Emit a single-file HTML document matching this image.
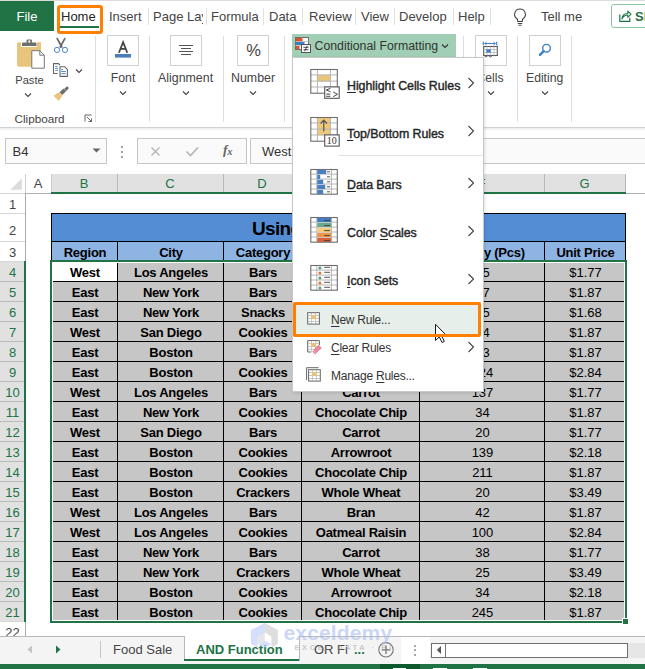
<!DOCTYPE html>
<html><head><meta charset="utf-8"><style>
html,body{margin:0;padding:0;}
body{width:645px;height:669px;position:relative;overflow:hidden;background:#fff;font-family:"Liberation Sans",sans-serif;}
body>div,body>svg,div>div{position:absolute;}
u{text-decoration:underline;text-underline-offset:2px;text-decoration-thickness:1px;}
</style></head><body>
<div style="left:0px;top:0px;width:645px;height:1px;background:#dcdcdc"></div>
<div style="left:0px;top:1px;width:54px;height:30px;background:#217346"></div>
<div style="left:0px;top:10.00px;width:54px;font-size:13px;line-height:13px;font-weight:400;color:#fff;text-align:center;white-space:nowrap;">File</div>
<div style="left:61px;top:10.00px;font-size:13px;line-height:13px;font-weight:400;color:#262626;text-align:left;white-space:nowrap;">Home</div>
<div style="left:60px;top:26px;width:39px;height:2px;background:#217346"></div>
<div style="left:57px;top:5px;width:40px;height:23px;border:3px solid #ff8000;border-radius:3px"></div>
<div style="left:109px;top:10.00px;font-size:13px;line-height:13px;font-weight:400;color:#444;text-align:left;white-space:nowrap;">Insert</div>
<div style="left:153px;top:0;width:50px;height:33px;overflow:hidden">
<div style="left:0;top:10.00px;font-size:13px;line-height:13px;color:#444;white-space:nowrap">Page Layout</div></div>
<div style="left:211px;top:0;width:48px;height:33px;overflow:hidden">
<div style="left:0;top:10.00px;font-size:13px;line-height:13px;color:#444;white-space:nowrap">Formula</div></div>
<div style="left:269px;top:10.00px;font-size:13px;line-height:13px;font-weight:400;color:#444;text-align:left;white-space:nowrap;">Data</div>
<div style="left:309px;top:10.00px;font-size:13px;line-height:13px;font-weight:400;color:#444;text-align:left;white-space:nowrap;">Review</div>
<div style="left:361px;top:10.00px;font-size:13px;line-height:13px;font-weight:400;color:#444;text-align:left;white-space:nowrap;">View</div>
<div style="left:399px;top:0;width:49px;height:33px;overflow:hidden">
<div style="left:0;top:10.00px;font-size:13px;line-height:13px;color:#444;white-space:nowrap">Develop</div></div>
<div style="left:458px;top:10.00px;font-size:13px;line-height:13px;font-weight:400;color:#444;text-align:left;white-space:nowrap;">Help</div>
<div style="left:541px;top:10.00px;font-size:13px;line-height:13px;font-weight:400;color:#444;text-align:left;white-space:nowrap;">Tell me</div>
<div style="left:148px;top:8px;width:1px;height:17px;background:#e1e1e1"></div>
<div style="left:206px;top:8px;width:1px;height:17px;background:#e1e1e1"></div>
<div style="left:263px;top:8px;width:1px;height:17px;background:#e1e1e1"></div>
<div style="left:302px;top:8px;width:1px;height:17px;background:#e1e1e1"></div>
<div style="left:355px;top:8px;width:1px;height:17px;background:#e1e1e1"></div>
<div style="left:394px;top:8px;width:1px;height:17px;background:#e1e1e1"></div>
<div style="left:453px;top:8px;width:1px;height:17px;background:#e1e1e1"></div>
<div style="left:490px;top:8px;width:1px;height:17px;background:#e1e1e1"></div>
<svg style="left:510px;top:6px" width="20" height="22" viewBox="510 6 20 22"><path d="M520 9a5.3 5.3 0 0 0-3.3 9.5c.7.6 1 1.2 1 2v1h4.6v-1c0-.8.3-1.4 1-2A5.3 5.3 0 0 0 520 9z" fill="none" stroke="#444" stroke-width="1.1"/><path d="M517.8 23.5h4.4M518.5 25.3h3" stroke="#444" stroke-width="1.1"/></svg>
<div style="left:611px;top:4px;width:40px;height:24px;border:1px solid #8cc3a2;border-radius:3px;background:#fff;box-sizing:border-box"></div>
<svg style="left:617px;top:8px" width="16" height="16" viewBox="617 8 16 16"><path d="M619.8 14.5v6.8h10v-3.5" fill="none" stroke="#217346" stroke-width="1.2"/><path d="M622 19c0-3.3 2.2-5.5 5.8-5.5V11l3.2 3.2-3.2 3.2v-2.3c-2.8 0-4.6 1.3-5.8 3.9z" fill="none" stroke="#217346" stroke-width="1.05" stroke-linejoin="round"/></svg>
<div style="left:635px;top:10.00px;font-size:13px;line-height:13px;font-weight:700;color:#217346;text-align:left;white-space:nowrap;">Share</div>
<div style="left:95px;top:36px;width:1px;height:86px;background:#dedede"></div>
<div style="left:149px;top:36px;width:1px;height:86px;background:#dedede"></div>
<div style="left:223px;top:36px;width:1px;height:86px;background:#dedede"></div>
<div style="left:284px;top:36px;width:1px;height:86px;background:#dedede"></div>
<div style="left:463px;top:36px;width:1px;height:86px;background:#dedede"></div>
<div style="left:517px;top:36px;width:1px;height:86px;background:#dedede"></div>
<div style="left:571px;top:36px;width:1px;height:86px;background:#dedede"></div>
<div style="left:0px;top:127px;width:645px;height:1px;background:#d2d2d2"></div>
<div style="left:0px;top:128px;width:645px;height:3px;background:linear-gradient(#ebebeb,#fff)"></div>
<svg style="left:14px;top:36px" width="34" height="36" viewBox="14 36 34 36"><path d="M19 42.2h22a0 0 0 0 1 0 0v24.5H19a2 2 0 0 1-2-2V44.2a2 2 0 0 1 2-2z" fill="#e8c47c"/>
<rect x="21" y="42" width="16" height="5" fill="#fff"/>
<path d="M22 46v-2.5a1 1 0 0 1 1-1h3.5v-2a1 1 0 0 1 1-1h3.5a1 1 0 0 1 1 1v2h3.5a1 1 0 0 1 1 1V46z" fill="#6e6e6e"/>
<rect x="28.3" y="40.5" width="2" height="2" fill="#fff"/>
<path d="M31.8 50.7h8l4.5 4.5v13h-12.5z" fill="#fff" stroke="#777" stroke-width="1"/>
<path d="M39.8 50.7v4.5h4.5" fill="none" stroke="#777" stroke-width="1"/></svg>
<div style="left:15.3px;top:74.60px;font-size:11.1px;line-height:11.1px;font-weight:400;color:#444;text-align:left;white-space:nowrap;">Paste</div>
<svg style="left:23px;top:91px" width="10" height="8" viewBox="23 91 10 8"><path d="M25 93.5l3 3 3-3" fill="none" stroke="#444" stroke-width="1.1"/></svg>
<svg style="left:52px;top:36px" width="18" height="18" viewBox="52 36 18 18"><path d="M57.2 38.6l4.6 8.4M64.8 38.6l-4.6 8.4" stroke="#666" stroke-width="1.7" stroke-linecap="round"/>
<circle cx="57" cy="49.9" r="2.6" fill="none" stroke="#3d7fc6" stroke-width="0.95"/>
<circle cx="65" cy="49.9" r="2.6" fill="none" stroke="#3d7fc6" stroke-width="0.95"/></svg>
<svg style="left:52px;top:62px" width="18" height="17" viewBox="52 62 18 17"><path d="M57.6 73.5h-4.1V63.6h5l1.6 1.6" fill="none" stroke="#666" stroke-width="1.1"/>
<path d="M60 66.8h4.8l2.6 2.6v7H60z" fill="#fff" stroke="#666" stroke-width="1.1"/>
<path d="M55.2 66.4h2.3M55.2 68.4h2.8M55.2 70.4h2.8M61.2 69.4h1.7M61.2 71.5h4.6M61.2 73.6h4.6" stroke="#3d7fc6" stroke-width="0.9"/></svg>
<svg style="left:73.5px;top:66.5px" width="10" height="8" viewBox="73.5 66.5 10 8"><path d="M75.5 69.0l3 3 3-3" fill="none" stroke="#444" stroke-width="1.1"/></svg>
<svg style="left:52px;top:85px" width="18" height="17" viewBox="52 85 18 17"><path d="M64.3 88.8l2.8-2.6 1.9 1.9-2.6 2.8z" fill="#6e6e6e"/><path d="M59.5 92.2l4.2-3.8 2.5 2.5-3.8 4.2z" fill="#6e6e6e"/>
<path d="M53.5 95.8l5.6-3.6 3.3 3.3-3.6 5.6z" fill="#e8c47c"/></svg>
<div style="left:14.5px;top:112.60px;font-size:11.7px;line-height:11.7px;font-weight:400;color:#444;text-align:left;white-space:nowrap;">Clipboard</div>
<svg style="left:84px;top:114px" width="9" height="9" viewBox="84 114 9 9"><path d="M85 121.5v-6.5h6.5" fill="none" stroke="#666" stroke-width="1"/><path d="M87 117l4.5 4.5M91.5 118.5v3h-3" fill="none" stroke="#666" stroke-width="1"/></svg>
<div style="left:107px;top:35px;width:32px;height:31px;border:1px solid #d0d0d0;background:#fff;box-sizing:border-box"></div>
<svg style="left:107px;top:35px" width="32" height="31" viewBox="107 35 32 31"><path d="M118.9 52.8l4.2-10.6 4.2 10.6M120.4 48.8h5.4" fill="none" stroke="#444" stroke-width="1.75"/><rect x="115" y="54" width="16" height="3.6" fill="#4a7ebb"/></svg>
<div style="left:107px;top:71.59px;width:32px;font-size:12.3px;line-height:12.3px;font-weight:400;color:#444;text-align:center;white-space:nowrap;">Font</div>
<svg style="left:118px;top:89px" width="10" height="8" viewBox="118 89 10 8"><path d="M120 91.5l3 3 3-3" fill="none" stroke="#444" stroke-width="1.1"/></svg>
<div style="left:170px;top:35px;width:32px;height:31px;border:1px solid #d0d0d0;background:#fff;box-sizing:border-box"></div>
<svg style="left:170px;top:35px" width="32" height="31" viewBox="170 35 32 31"><path d="M179 45.5h14M181 48.5h10M179 51.5h14M181 54.5h10" stroke="#555" stroke-width="1.1"/></svg>
<div style="left:158px;top:71.50px;font-size:12.4px;line-height:12.4px;font-weight:400;color:#444;text-align:left;white-space:nowrap;">Alignment</div>
<svg style="left:181px;top:89px" width="10" height="8" viewBox="181 89 10 8"><path d="M183 91.5l3 3 3-3" fill="none" stroke="#444" stroke-width="1.1"/></svg>
<div style="left:237px;top:35px;width:32px;height:31px;border:1px solid #d0d0d0;background:#fff;box-sizing:border-box"></div>
<div style="left:237.5px;top:42.03px;width:32px;font-size:16.5px;line-height:16.5px;font-weight:400;color:#444;text-align:center;white-space:nowrap;">%</div>
<div style="left:231px;top:71.50px;font-size:12.4px;line-height:12.4px;font-weight:400;color:#444;text-align:left;white-space:nowrap;">Number</div>
<svg style="left:248px;top:89px" width="10" height="8" viewBox="248 89 10 8"><path d="M250 91.5l3 3 3-3" fill="none" stroke="#444" stroke-width="1.1"/></svg>
<div style="left:475px;top:35px;width:32px;height:31px;border:1px solid #d0d0d0;background:#fff;box-sizing:border-box"></div>
<svg style="left:475px;top:35px" width="32" height="31" viewBox="475 35 32 31"><path d="M484.5 43.5h11" stroke="#3d7fc6" stroke-width="1"/><path d="M483.3 41.8v3.4M496.7 41.8v3.4" stroke="#3d7fc6" stroke-width="1.2"/>
<path d="M486.5 42l-1.8 1.5 1.8 1.5M493.5 42l1.8 1.5-1.8 1.5" fill="none" stroke="#3d7fc6" stroke-width="0.9"/>
<rect x="483.7" y="46.5" width="13.6" height="9" fill="#fff" stroke="#555" stroke-width="1.1"/>
<path d="M483.7 49.5h13.6M483.7 52.5h13.6M487 46.5v9M490.5 46.5v9M494 46.5v9" stroke="#b8b8b8" stroke-width="0.8"/>
<rect x="486.3" y="49.3" width="4.4" height="3.3" fill="#3d7fc6"/>
<path d="M484.5 56.3q1.5 1.3 3 0M488.8 56.3q1.5 1.3 3 0" fill="none" stroke="#555" stroke-width="0.9"/></svg>
<div style="left:474px;top:71.76px;width:32px;font-size:12.1px;line-height:12.1px;font-weight:400;color:#444;text-align:center;white-space:nowrap;">Cells</div>
<svg style="left:486px;top:89px" width="10" height="8" viewBox="486 89 10 8"><path d="M488 91.5l3 3 3-3" fill="none" stroke="#444" stroke-width="1.1"/></svg>
<div style="left:529px;top:35px;width:32px;height:31px;border:1px solid #d0d0d0;background:#fff;box-sizing:border-box"></div>
<svg style="left:529px;top:35px" width="32" height="31" viewBox="529 35 32 31"><circle cx="546.5" cy="48.2" r="3.8" fill="none" stroke="#3d7fc6" stroke-width="1.4"/><path d="M543.6 51.2l-3.6 3.6" stroke="#3d7fc6" stroke-width="2.4" stroke-linecap="round"/></svg>
<div style="left:526px;top:71.67px;font-size:12.2px;line-height:12.2px;font-weight:400;color:#444;text-align:left;white-space:nowrap;">Editing</div>
<svg style="left:540px;top:89px" width="10" height="8" viewBox="540 89 10 8"><path d="M542 91.5l3 3 3-3" fill="none" stroke="#444" stroke-width="1.1"/></svg>
<div style="left:292px;top:34px;width:164px;height:23px;background:#a0cfb5"></div>
<svg style="left:292px;top:34px" width="22" height="22" viewBox="292 34 22 22"><rect x="295.5" y="37.5" width="13" height="12" fill="#fff" stroke="#6e6e6e" stroke-width="1"/>
<path d="M301.5 37.5v12M295.5 41.5h13M295.5 45.5h13" stroke="#bbb" stroke-width="0.8"/>
<rect x="296" y="38" width="6.5" height="3.2" fill="#d9532c"/><rect x="296" y="42" width="8.5" height="3" fill="#3d7fc6"/><rect x="296" y="46" width="3.5" height="3.2" fill="#d9532c"/>
<rect x="301.5" y="44.5" width="9" height="8" fill="#fff" stroke="#555" stroke-width="1"/>
<path d="M303.5 47.3h5M303.5 49.7h5M307.3 45.7l-2.6 5.6" stroke="#333" stroke-width="0.9"/></svg>
<div style="left:314.5px;top:39.59px;font-size:12.3px;line-height:12.3px;font-weight:400;color:#333;text-align:left;white-space:nowrap;">Conditional Formatting</div>
<svg style="left:439.5px;top:41.5px" width="10" height="8" viewBox="439.5 41.5 10 8"><path d="M441.5 44.0l3 3 3-3" fill="none" stroke="#333" stroke-width="1.1"/></svg>
<div style="left:5px;top:138px;width:102px;height:26px;border:1px solid #c6c6c6;background:#fafafa;box-sizing:border-box"></div>
<div style="left:12.5px;top:145.00px;font-size:13px;line-height:13px;font-weight:400;color:#333;text-align:left;white-space:nowrap;">B4</div>
<svg style="left:90px;top:146px" width="12" height="8" viewBox="90 146 12 8"><path d="M92.5 148.5h8l-4 4z" fill="#666"/></svg>
<div style="left:121px;top:145.5px;width:2px;height:2px;background:#a0a0a0"></div>
<div style="left:121px;top:150.5px;width:2px;height:2px;background:#a0a0a0"></div>
<div style="left:121px;top:155.5px;width:2px;height:2px;background:#a0a0a0"></div>
<div style="left:137px;top:138px;width:110px;height:26px;border:1px solid #c6c6c6;background:#fafafa;box-sizing:border-box"></div>
<svg style="left:148px;top:144px" width="16" height="16" viewBox="148 144 16 16"><path d="M151.5 147.5l8 8M159.5 147.5l-8 8" stroke="#b4b4b4" stroke-width="1.3"/></svg>
<svg style="left:184px;top:144px" width="18" height="16" viewBox="184 144 18 16"><path d="M186.5 151.5l4 4 7.5-8" fill="none" stroke="#b4b4b4" stroke-width="1.6"/></svg>
<svg style="left:220px;top:142px" width="18" height="18" viewBox="220 142 18 18"><text x="223" y="154.3" font-family="Liberation Serif" font-style="italic" font-weight="700" font-size="13.5" fill="#666">f</text><text x="227.3" y="154.8" font-family="Liberation Serif" font-style="italic" font-weight="700" font-size="10.5" fill="#666">x</text></svg>
<div style="left:250px;top:138px;width:400px;height:26px;border:1px solid #c6c6c6;background:#fafafa;box-sizing:border-box"></div>
<div style="left:262px;top:145.00px;font-size:13px;line-height:13px;font-weight:400;color:#333;text-align:left;white-space:nowrap;">West</div>
<div style="left:51px;top:174px;width:574px;height:18px;background:#e1e1e1"></div>
<div style="left:51px;top:192px;width:575px;height:2px;background:#217346"></div>
<div style="left:0px;top:193px;width:25px;height:1px;background:#d4d4d4"></div>
<div style="left:25px;top:193px;width:26px;height:1px;background:#b0b0b0"></div>
<div style="left:626px;top:193px;width:19px;height:1px;background:#b0b0b0"></div>
<div style="left:25px;top:174px;width:1px;height:19px;background:#cdcdcd"></div>
<div style="left:51px;top:174px;width:1px;height:18px;background:#cdcdcd"></div>
<div style="left:117px;top:174px;width:1px;height:18px;background:#b8b8b8"></div>
<div style="left:223px;top:174px;width:1px;height:18px;background:#b8b8b8"></div>
<div style="left:301px;top:174px;width:1px;height:18px;background:#b8b8b8"></div>
<div style="left:419px;top:174px;width:1px;height:18px;background:#b8b8b8"></div>
<div style="left:544px;top:174px;width:1px;height:18px;background:#b8b8b8"></div>
<div style="left:625px;top:174px;width:1px;height:18px;background:#b8b8b8"></div>
<svg style="left:8px;top:176px" width="16" height="16" viewBox="8 176 16 16"><path d="M21.8 178.5V189.8H10.3z" fill="#dcdcdc"/></svg>
<div style="left:25px;top:177.00px;width:26px;font-size:13px;line-height:13px;font-weight:400;color:#444;text-align:center;white-space:nowrap;">A</div>
<div style="left:51px;top:177.00px;width:66px;font-size:13px;line-height:13px;font-weight:400;color:#217346;text-align:center;white-space:nowrap;">B</div>
<div style="left:117px;top:177.00px;width:106px;font-size:13px;line-height:13px;font-weight:400;color:#217346;text-align:center;white-space:nowrap;">C</div>
<div style="left:223px;top:177.00px;width:78px;font-size:13px;line-height:13px;font-weight:400;color:#217346;text-align:center;white-space:nowrap;">D</div>
<div style="left:301px;top:177.00px;width:118px;font-size:13px;line-height:13px;font-weight:400;color:#217346;text-align:center;white-space:nowrap;">E</div>
<div style="left:419px;top:177.00px;width:125px;font-size:13px;line-height:13px;font-weight:400;color:#217346;text-align:center;white-space:nowrap;">F</div>
<div style="left:544px;top:177.00px;width:81px;font-size:13px;line-height:13px;font-weight:400;color:#217346;text-align:center;white-space:nowrap;">G</div>
<div style="left:0px;top:213px;width:25px;height:1px;background:#d6d6d6"></div>
<div style="left:0px;top:198.00px;width:25px;font-size:13px;line-height:13px;font-weight:400;color:#444;text-align:center;white-space:nowrap;">1</div>
<div style="left:0px;top:241px;width:25px;height:1px;background:#d6d6d6"></div>
<div style="left:0px;top:224.00px;width:25px;font-size:13px;line-height:13px;font-weight:400;color:#444;text-align:center;white-space:nowrap;">2</div>
<div style="left:0px;top:261px;width:25px;height:1px;background:#d6d6d6"></div>
<div style="left:0px;top:246.00px;width:25px;font-size:13px;line-height:13px;font-weight:400;color:#444;text-align:center;white-space:nowrap;">3</div>
<div style="left:0px;top:262px;width:24px;height:19px;background:#e1e1e1"></div>
<div style="left:0px;top:281px;width:24px;height:1px;background:#bababa"></div>
<div style="left:0px;top:266.00px;width:25px;font-size:13px;line-height:13px;font-weight:400;color:#217346;text-align:center;white-space:nowrap;">4</div>
<div style="left:0px;top:282px;width:24px;height:19px;background:#e1e1e1"></div>
<div style="left:0px;top:301px;width:24px;height:1px;background:#bababa"></div>
<div style="left:0px;top:286.00px;width:25px;font-size:13px;line-height:13px;font-weight:400;color:#217346;text-align:center;white-space:nowrap;">5</div>
<div style="left:0px;top:302px;width:24px;height:19px;background:#e1e1e1"></div>
<div style="left:0px;top:321px;width:24px;height:1px;background:#bababa"></div>
<div style="left:0px;top:306.00px;width:25px;font-size:13px;line-height:13px;font-weight:400;color:#217346;text-align:center;white-space:nowrap;">6</div>
<div style="left:0px;top:322px;width:24px;height:19px;background:#e1e1e1"></div>
<div style="left:0px;top:341px;width:24px;height:1px;background:#bababa"></div>
<div style="left:0px;top:326.00px;width:25px;font-size:13px;line-height:13px;font-weight:400;color:#217346;text-align:center;white-space:nowrap;">7</div>
<div style="left:0px;top:342px;width:24px;height:19px;background:#e1e1e1"></div>
<div style="left:0px;top:361px;width:24px;height:1px;background:#bababa"></div>
<div style="left:0px;top:346.00px;width:25px;font-size:13px;line-height:13px;font-weight:400;color:#217346;text-align:center;white-space:nowrap;">8</div>
<div style="left:0px;top:362px;width:24px;height:19px;background:#e1e1e1"></div>
<div style="left:0px;top:381px;width:24px;height:1px;background:#bababa"></div>
<div style="left:0px;top:366.00px;width:25px;font-size:13px;line-height:13px;font-weight:400;color:#217346;text-align:center;white-space:nowrap;">9</div>
<div style="left:0px;top:382px;width:24px;height:19px;background:#e1e1e1"></div>
<div style="left:0px;top:401px;width:24px;height:1px;background:#bababa"></div>
<div style="left:0px;top:386.00px;width:25px;font-size:13px;line-height:13px;font-weight:400;color:#217346;text-align:center;white-space:nowrap;">10</div>
<div style="left:0px;top:402px;width:24px;height:19px;background:#e1e1e1"></div>
<div style="left:0px;top:421px;width:24px;height:1px;background:#bababa"></div>
<div style="left:0px;top:406.00px;width:25px;font-size:13px;line-height:13px;font-weight:400;color:#217346;text-align:center;white-space:nowrap;">11</div>
<div style="left:0px;top:422px;width:24px;height:19px;background:#e1e1e1"></div>
<div style="left:0px;top:441px;width:24px;height:1px;background:#bababa"></div>
<div style="left:0px;top:426.00px;width:25px;font-size:13px;line-height:13px;font-weight:400;color:#217346;text-align:center;white-space:nowrap;">12</div>
<div style="left:0px;top:442px;width:24px;height:19px;background:#e1e1e1"></div>
<div style="left:0px;top:461px;width:24px;height:1px;background:#bababa"></div>
<div style="left:0px;top:446.00px;width:25px;font-size:13px;line-height:13px;font-weight:400;color:#217346;text-align:center;white-space:nowrap;">13</div>
<div style="left:0px;top:462px;width:24px;height:19px;background:#e1e1e1"></div>
<div style="left:0px;top:481px;width:24px;height:1px;background:#bababa"></div>
<div style="left:0px;top:466.00px;width:25px;font-size:13px;line-height:13px;font-weight:400;color:#217346;text-align:center;white-space:nowrap;">14</div>
<div style="left:0px;top:482px;width:24px;height:19px;background:#e1e1e1"></div>
<div style="left:0px;top:501px;width:24px;height:1px;background:#bababa"></div>
<div style="left:0px;top:486.00px;width:25px;font-size:13px;line-height:13px;font-weight:400;color:#217346;text-align:center;white-space:nowrap;">15</div>
<div style="left:0px;top:502px;width:24px;height:19px;background:#e1e1e1"></div>
<div style="left:0px;top:521px;width:24px;height:1px;background:#bababa"></div>
<div style="left:0px;top:506.00px;width:25px;font-size:13px;line-height:13px;font-weight:400;color:#217346;text-align:center;white-space:nowrap;">16</div>
<div style="left:0px;top:522px;width:24px;height:19px;background:#e1e1e1"></div>
<div style="left:0px;top:541px;width:24px;height:1px;background:#bababa"></div>
<div style="left:0px;top:526.00px;width:25px;font-size:13px;line-height:13px;font-weight:400;color:#217346;text-align:center;white-space:nowrap;">17</div>
<div style="left:0px;top:542px;width:24px;height:19px;background:#e1e1e1"></div>
<div style="left:0px;top:561px;width:24px;height:1px;background:#bababa"></div>
<div style="left:0px;top:546.00px;width:25px;font-size:13px;line-height:13px;font-weight:400;color:#217346;text-align:center;white-space:nowrap;">18</div>
<div style="left:0px;top:562px;width:24px;height:19px;background:#e1e1e1"></div>
<div style="left:0px;top:581px;width:24px;height:1px;background:#bababa"></div>
<div style="left:0px;top:566.00px;width:25px;font-size:13px;line-height:13px;font-weight:400;color:#217346;text-align:center;white-space:nowrap;">19</div>
<div style="left:0px;top:582px;width:24px;height:19px;background:#e1e1e1"></div>
<div style="left:0px;top:601px;width:24px;height:1px;background:#bababa"></div>
<div style="left:0px;top:586.00px;width:25px;font-size:13px;line-height:13px;font-weight:400;color:#217346;text-align:center;white-space:nowrap;">20</div>
<div style="left:0px;top:602px;width:24px;height:19px;background:#e1e1e1"></div>
<div style="left:0px;top:621px;width:25px;height:1px;background:#d6d6d6"></div>
<div style="left:0px;top:606.00px;width:25px;font-size:13px;line-height:13px;font-weight:400;color:#217346;text-align:center;white-space:nowrap;">21</div>
<div style="left:0px;top:626.00px;width:25px;font-size:13px;line-height:13px;font-weight:400;color:#444;text-align:center;white-space:nowrap;">22</div>
<div style="left:25px;top:193px;width:1px;height:68px;background:#ababab"></div>
<div style="left:25px;top:622px;width:1px;height:20px;background:#ababab"></div>
<div style="left:24px;top:261px;width:2px;height:361px;background:#217346"></div>
<div style="left:51px;top:213px;width:575px;height:28px;background:#548dd4"></div>
<div style="left:51px;top:213px;width:241px;height:28px;overflow:hidden">
<div style="left:201px;top:5.8px;font-size:19px;line-height:19px;font-weight:700;color:#000;white-space:nowrap;letter-spacing:-0.65px">Using AND Function</div></div>
<div style="left:51px;top:241px;width:575px;height:20px;background:#8db4e3"></div>
<div style="left:51px;top:261px;width:575px;height:360px;background:#c6c6c6"></div>
<div style="left:51px;top:261px;width:66px;height:20px;background:#fff"></div>
<div style="left:52px;top:246.00px;width:66px;font-size:13px;line-height:13px;font-weight:700;color:#000;text-align:center;white-space:nowrap;letter-spacing:-0.25px">Region</div>
<div style="left:118px;top:246.00px;width:106px;font-size:13px;line-height:13px;font-weight:700;color:#000;text-align:center;white-space:nowrap;letter-spacing:-0.25px">City</div>
<div style="left:224px;top:246.00px;width:78px;font-size:13px;line-height:13px;font-weight:700;color:#000;text-align:center;white-space:nowrap;letter-spacing:-0.25px">Category</div>
<div style="left:302px;top:246.00px;width:118px;font-size:13px;line-height:13px;font-weight:700;color:#000;text-align:center;white-space:nowrap;letter-spacing:-0.25px">Product</div>
<div style="left:420px;top:246.00px;width:125px;font-size:13px;line-height:13px;font-weight:700;color:#000;text-align:center;white-space:nowrap;letter-spacing:-0.25px">Quantity (Pcs)</div>
<div style="left:545px;top:246.00px;width:81px;font-size:13px;line-height:13px;font-weight:700;color:#000;text-align:center;white-space:nowrap;letter-spacing:-0.25px">Unit Price</div>
<div style="left:52px;top:266.00px;width:66px;font-size:13px;line-height:13px;font-weight:700;color:#000;text-align:center;white-space:nowrap;letter-spacing:-0.25px">West</div>
<div style="left:118px;top:266.00px;width:106px;font-size:13px;line-height:13px;font-weight:700;color:#000;text-align:center;white-space:nowrap;letter-spacing:-0.25px">Los Angeles</div>
<div style="left:224px;top:266.00px;width:78px;font-size:13px;line-height:13px;font-weight:700;color:#000;text-align:center;white-space:nowrap;letter-spacing:-0.25px">Bars</div>
<div style="left:302px;top:266.00px;width:118px;font-size:13px;line-height:13px;font-weight:700;color:#000;text-align:center;white-space:nowrap;letter-spacing:-0.25px">Carrot</div>
<div style="left:420px;top:266.00px;width:125px;font-size:13px;line-height:13px;font-weight:400;color:#000;text-align:center;white-space:nowrap;">45</div>
<div style="left:545px;top:266.00px;width:81px;font-size:13px;line-height:13px;font-weight:400;color:#000;text-align:center;white-space:nowrap;">$1.77</div>
<div style="left:52px;top:286.00px;width:66px;font-size:13px;line-height:13px;font-weight:700;color:#000;text-align:center;white-space:nowrap;letter-spacing:-0.25px">East</div>
<div style="left:118px;top:286.00px;width:106px;font-size:13px;line-height:13px;font-weight:700;color:#000;text-align:center;white-space:nowrap;letter-spacing:-0.25px">New York</div>
<div style="left:224px;top:286.00px;width:78px;font-size:13px;line-height:13px;font-weight:700;color:#000;text-align:center;white-space:nowrap;letter-spacing:-0.25px">Bars</div>
<div style="left:302px;top:286.00px;width:118px;font-size:13px;line-height:13px;font-weight:700;color:#000;text-align:center;white-space:nowrap;letter-spacing:-0.25px">Carrot</div>
<div style="left:420px;top:286.00px;width:125px;font-size:13px;line-height:13px;font-weight:400;color:#000;text-align:center;white-space:nowrap;">87</div>
<div style="left:545px;top:286.00px;width:81px;font-size:13px;line-height:13px;font-weight:400;color:#000;text-align:center;white-space:nowrap;">$1.87</div>
<div style="left:52px;top:306.00px;width:66px;font-size:13px;line-height:13px;font-weight:700;color:#000;text-align:center;white-space:nowrap;letter-spacing:-0.25px">East</div>
<div style="left:118px;top:306.00px;width:106px;font-size:13px;line-height:13px;font-weight:700;color:#000;text-align:center;white-space:nowrap;letter-spacing:-0.25px">New York</div>
<div style="left:224px;top:306.00px;width:78px;font-size:13px;line-height:13px;font-weight:700;color:#000;text-align:center;white-space:nowrap;letter-spacing:-0.25px">Snacks</div>
<div style="left:302px;top:306.00px;width:118px;font-size:13px;line-height:13px;font-weight:700;color:#000;text-align:center;white-space:nowrap;letter-spacing:-0.25px">Pretzels</div>
<div style="left:420px;top:306.00px;width:125px;font-size:13px;line-height:13px;font-weight:400;color:#000;text-align:center;white-space:nowrap;">55</div>
<div style="left:545px;top:306.00px;width:81px;font-size:13px;line-height:13px;font-weight:400;color:#000;text-align:center;white-space:nowrap;">$1.68</div>
<div style="left:52px;top:326.00px;width:66px;font-size:13px;line-height:13px;font-weight:700;color:#000;text-align:center;white-space:nowrap;letter-spacing:-0.25px">West</div>
<div style="left:118px;top:326.00px;width:106px;font-size:13px;line-height:13px;font-weight:700;color:#000;text-align:center;white-space:nowrap;letter-spacing:-0.25px">San Diego</div>
<div style="left:224px;top:326.00px;width:78px;font-size:13px;line-height:13px;font-weight:700;color:#000;text-align:center;white-space:nowrap;letter-spacing:-0.25px">Cookies</div>
<div style="left:302px;top:326.00px;width:118px;font-size:13px;line-height:13px;font-weight:700;color:#000;text-align:center;white-space:nowrap;letter-spacing:-0.25px">Chocolate Chip</div>
<div style="left:420px;top:326.00px;width:125px;font-size:13px;line-height:13px;font-weight:400;color:#000;text-align:center;white-space:nowrap;">54</div>
<div style="left:545px;top:326.00px;width:81px;font-size:13px;line-height:13px;font-weight:400;color:#000;text-align:center;white-space:nowrap;">$1.87</div>
<div style="left:52px;top:346.00px;width:66px;font-size:13px;line-height:13px;font-weight:700;color:#000;text-align:center;white-space:nowrap;letter-spacing:-0.25px">East</div>
<div style="left:118px;top:346.00px;width:106px;font-size:13px;line-height:13px;font-weight:700;color:#000;text-align:center;white-space:nowrap;letter-spacing:-0.25px">Boston</div>
<div style="left:224px;top:346.00px;width:78px;font-size:13px;line-height:13px;font-weight:700;color:#000;text-align:center;white-space:nowrap;letter-spacing:-0.25px">Bars</div>
<div style="left:302px;top:346.00px;width:118px;font-size:13px;line-height:13px;font-weight:700;color:#000;text-align:center;white-space:nowrap;letter-spacing:-0.25px">Carrot</div>
<div style="left:420px;top:346.00px;width:125px;font-size:13px;line-height:13px;font-weight:400;color:#000;text-align:center;white-space:nowrap;">73</div>
<div style="left:545px;top:346.00px;width:81px;font-size:13px;line-height:13px;font-weight:400;color:#000;text-align:center;white-space:nowrap;">$1.87</div>
<div style="left:52px;top:366.00px;width:66px;font-size:13px;line-height:13px;font-weight:700;color:#000;text-align:center;white-space:nowrap;letter-spacing:-0.25px">East</div>
<div style="left:118px;top:366.00px;width:106px;font-size:13px;line-height:13px;font-weight:700;color:#000;text-align:center;white-space:nowrap;letter-spacing:-0.25px">Boston</div>
<div style="left:224px;top:366.00px;width:78px;font-size:13px;line-height:13px;font-weight:700;color:#000;text-align:center;white-space:nowrap;letter-spacing:-0.25px">Cookies</div>
<div style="left:302px;top:366.00px;width:118px;font-size:13px;line-height:13px;font-weight:700;color:#000;text-align:center;white-space:nowrap;letter-spacing:-0.25px">Arrowroot</div>
<div style="left:420px;top:366.00px;width:125px;font-size:13px;line-height:13px;font-weight:400;color:#000;text-align:center;white-space:nowrap;">124</div>
<div style="left:545px;top:366.00px;width:81px;font-size:13px;line-height:13px;font-weight:400;color:#000;text-align:center;white-space:nowrap;">$2.84</div>
<div style="left:52px;top:386.00px;width:66px;font-size:13px;line-height:13px;font-weight:700;color:#000;text-align:center;white-space:nowrap;letter-spacing:-0.25px">West</div>
<div style="left:118px;top:386.00px;width:106px;font-size:13px;line-height:13px;font-weight:700;color:#000;text-align:center;white-space:nowrap;letter-spacing:-0.25px">Los Angeles</div>
<div style="left:224px;top:386.00px;width:78px;font-size:13px;line-height:13px;font-weight:700;color:#000;text-align:center;white-space:nowrap;letter-spacing:-0.25px">Bars</div>
<div style="left:302px;top:386.00px;width:118px;font-size:13px;line-height:13px;font-weight:700;color:#000;text-align:center;white-space:nowrap;letter-spacing:-0.25px">Carrot</div>
<div style="left:420px;top:386.00px;width:125px;font-size:13px;line-height:13px;font-weight:400;color:#000;text-align:center;white-space:nowrap;">137</div>
<div style="left:545px;top:386.00px;width:81px;font-size:13px;line-height:13px;font-weight:400;color:#000;text-align:center;white-space:nowrap;">$1.77</div>
<div style="left:52px;top:406.00px;width:66px;font-size:13px;line-height:13px;font-weight:700;color:#000;text-align:center;white-space:nowrap;letter-spacing:-0.25px">East</div>
<div style="left:118px;top:406.00px;width:106px;font-size:13px;line-height:13px;font-weight:700;color:#000;text-align:center;white-space:nowrap;letter-spacing:-0.25px">New York</div>
<div style="left:224px;top:406.00px;width:78px;font-size:13px;line-height:13px;font-weight:700;color:#000;text-align:center;white-space:nowrap;letter-spacing:-0.25px">Cookies</div>
<div style="left:302px;top:406.00px;width:118px;font-size:13px;line-height:13px;font-weight:700;color:#000;text-align:center;white-space:nowrap;letter-spacing:-0.25px">Chocolate Chip</div>
<div style="left:420px;top:406.00px;width:125px;font-size:13px;line-height:13px;font-weight:400;color:#000;text-align:center;white-space:nowrap;">34</div>
<div style="left:545px;top:406.00px;width:81px;font-size:13px;line-height:13px;font-weight:400;color:#000;text-align:center;white-space:nowrap;">$1.87</div>
<div style="left:52px;top:426.00px;width:66px;font-size:13px;line-height:13px;font-weight:700;color:#000;text-align:center;white-space:nowrap;letter-spacing:-0.25px">West</div>
<div style="left:118px;top:426.00px;width:106px;font-size:13px;line-height:13px;font-weight:700;color:#000;text-align:center;white-space:nowrap;letter-spacing:-0.25px">San Diego</div>
<div style="left:224px;top:426.00px;width:78px;font-size:13px;line-height:13px;font-weight:700;color:#000;text-align:center;white-space:nowrap;letter-spacing:-0.25px">Bars</div>
<div style="left:302px;top:426.00px;width:118px;font-size:13px;line-height:13px;font-weight:700;color:#000;text-align:center;white-space:nowrap;letter-spacing:-0.25px">Carrot</div>
<div style="left:420px;top:426.00px;width:125px;font-size:13px;line-height:13px;font-weight:400;color:#000;text-align:center;white-space:nowrap;">20</div>
<div style="left:545px;top:426.00px;width:81px;font-size:13px;line-height:13px;font-weight:400;color:#000;text-align:center;white-space:nowrap;">$1.77</div>
<div style="left:52px;top:446.00px;width:66px;font-size:13px;line-height:13px;font-weight:700;color:#000;text-align:center;white-space:nowrap;letter-spacing:-0.25px">East</div>
<div style="left:118px;top:446.00px;width:106px;font-size:13px;line-height:13px;font-weight:700;color:#000;text-align:center;white-space:nowrap;letter-spacing:-0.25px">Boston</div>
<div style="left:224px;top:446.00px;width:78px;font-size:13px;line-height:13px;font-weight:700;color:#000;text-align:center;white-space:nowrap;letter-spacing:-0.25px">Cookies</div>
<div style="left:302px;top:446.00px;width:118px;font-size:13px;line-height:13px;font-weight:700;color:#000;text-align:center;white-space:nowrap;letter-spacing:-0.25px">Arrowroot</div>
<div style="left:420px;top:446.00px;width:125px;font-size:13px;line-height:13px;font-weight:400;color:#000;text-align:center;white-space:nowrap;">139</div>
<div style="left:545px;top:446.00px;width:81px;font-size:13px;line-height:13px;font-weight:400;color:#000;text-align:center;white-space:nowrap;">$2.18</div>
<div style="left:52px;top:466.00px;width:66px;font-size:13px;line-height:13px;font-weight:700;color:#000;text-align:center;white-space:nowrap;letter-spacing:-0.25px">East</div>
<div style="left:118px;top:466.00px;width:106px;font-size:13px;line-height:13px;font-weight:700;color:#000;text-align:center;white-space:nowrap;letter-spacing:-0.25px">Boston</div>
<div style="left:224px;top:466.00px;width:78px;font-size:13px;line-height:13px;font-weight:700;color:#000;text-align:center;white-space:nowrap;letter-spacing:-0.25px">Cookies</div>
<div style="left:302px;top:466.00px;width:118px;font-size:13px;line-height:13px;font-weight:700;color:#000;text-align:center;white-space:nowrap;letter-spacing:-0.25px">Chocolate Chip</div>
<div style="left:420px;top:466.00px;width:125px;font-size:13px;line-height:13px;font-weight:400;color:#000;text-align:center;white-space:nowrap;">211</div>
<div style="left:545px;top:466.00px;width:81px;font-size:13px;line-height:13px;font-weight:400;color:#000;text-align:center;white-space:nowrap;">$1.87</div>
<div style="left:52px;top:486.00px;width:66px;font-size:13px;line-height:13px;font-weight:700;color:#000;text-align:center;white-space:nowrap;letter-spacing:-0.25px">East</div>
<div style="left:118px;top:486.00px;width:106px;font-size:13px;line-height:13px;font-weight:700;color:#000;text-align:center;white-space:nowrap;letter-spacing:-0.25px">Boston</div>
<div style="left:224px;top:486.00px;width:78px;font-size:13px;line-height:13px;font-weight:700;color:#000;text-align:center;white-space:nowrap;letter-spacing:-0.25px">Crackers</div>
<div style="left:302px;top:486.00px;width:118px;font-size:13px;line-height:13px;font-weight:700;color:#000;text-align:center;white-space:nowrap;letter-spacing:-0.25px">Whole Wheat</div>
<div style="left:420px;top:486.00px;width:125px;font-size:13px;line-height:13px;font-weight:400;color:#000;text-align:center;white-space:nowrap;">20</div>
<div style="left:545px;top:486.00px;width:81px;font-size:13px;line-height:13px;font-weight:400;color:#000;text-align:center;white-space:nowrap;">$3.49</div>
<div style="left:52px;top:506.00px;width:66px;font-size:13px;line-height:13px;font-weight:700;color:#000;text-align:center;white-space:nowrap;letter-spacing:-0.25px">West</div>
<div style="left:118px;top:506.00px;width:106px;font-size:13px;line-height:13px;font-weight:700;color:#000;text-align:center;white-space:nowrap;letter-spacing:-0.25px">Los Angeles</div>
<div style="left:224px;top:506.00px;width:78px;font-size:13px;line-height:13px;font-weight:700;color:#000;text-align:center;white-space:nowrap;letter-spacing:-0.25px">Bars</div>
<div style="left:302px;top:506.00px;width:118px;font-size:13px;line-height:13px;font-weight:700;color:#000;text-align:center;white-space:nowrap;letter-spacing:-0.25px">Bran</div>
<div style="left:420px;top:506.00px;width:125px;font-size:13px;line-height:13px;font-weight:400;color:#000;text-align:center;white-space:nowrap;">42</div>
<div style="left:545px;top:506.00px;width:81px;font-size:13px;line-height:13px;font-weight:400;color:#000;text-align:center;white-space:nowrap;">$1.87</div>
<div style="left:52px;top:526.00px;width:66px;font-size:13px;line-height:13px;font-weight:700;color:#000;text-align:center;white-space:nowrap;letter-spacing:-0.25px">West</div>
<div style="left:118px;top:526.00px;width:106px;font-size:13px;line-height:13px;font-weight:700;color:#000;text-align:center;white-space:nowrap;letter-spacing:-0.25px">Los Angeles</div>
<div style="left:224px;top:526.00px;width:78px;font-size:13px;line-height:13px;font-weight:700;color:#000;text-align:center;white-space:nowrap;letter-spacing:-0.25px">Cookies</div>
<div style="left:302px;top:526.00px;width:118px;font-size:13px;line-height:13px;font-weight:700;color:#000;text-align:center;white-space:nowrap;letter-spacing:-0.25px">Oatmeal Raisin</div>
<div style="left:420px;top:526.00px;width:125px;font-size:13px;line-height:13px;font-weight:400;color:#000;text-align:center;white-space:nowrap;">100</div>
<div style="left:545px;top:526.00px;width:81px;font-size:13px;line-height:13px;font-weight:400;color:#000;text-align:center;white-space:nowrap;">$2.84</div>
<div style="left:52px;top:546.00px;width:66px;font-size:13px;line-height:13px;font-weight:700;color:#000;text-align:center;white-space:nowrap;letter-spacing:-0.25px">East</div>
<div style="left:118px;top:546.00px;width:106px;font-size:13px;line-height:13px;font-weight:700;color:#000;text-align:center;white-space:nowrap;letter-spacing:-0.25px">New York</div>
<div style="left:224px;top:546.00px;width:78px;font-size:13px;line-height:13px;font-weight:700;color:#000;text-align:center;white-space:nowrap;letter-spacing:-0.25px">Bars</div>
<div style="left:302px;top:546.00px;width:118px;font-size:13px;line-height:13px;font-weight:700;color:#000;text-align:center;white-space:nowrap;letter-spacing:-0.25px">Carrot</div>
<div style="left:420px;top:546.00px;width:125px;font-size:13px;line-height:13px;font-weight:400;color:#000;text-align:center;white-space:nowrap;">38</div>
<div style="left:545px;top:546.00px;width:81px;font-size:13px;line-height:13px;font-weight:400;color:#000;text-align:center;white-space:nowrap;">$1.77</div>
<div style="left:52px;top:566.00px;width:66px;font-size:13px;line-height:13px;font-weight:700;color:#000;text-align:center;white-space:nowrap;letter-spacing:-0.25px">East</div>
<div style="left:118px;top:566.00px;width:106px;font-size:13px;line-height:13px;font-weight:700;color:#000;text-align:center;white-space:nowrap;letter-spacing:-0.25px">New York</div>
<div style="left:224px;top:566.00px;width:78px;font-size:13px;line-height:13px;font-weight:700;color:#000;text-align:center;white-space:nowrap;letter-spacing:-0.25px">Crackers</div>
<div style="left:302px;top:566.00px;width:118px;font-size:13px;line-height:13px;font-weight:700;color:#000;text-align:center;white-space:nowrap;letter-spacing:-0.25px">Whole Wheat</div>
<div style="left:420px;top:566.00px;width:125px;font-size:13px;line-height:13px;font-weight:400;color:#000;text-align:center;white-space:nowrap;">25</div>
<div style="left:545px;top:566.00px;width:81px;font-size:13px;line-height:13px;font-weight:400;color:#000;text-align:center;white-space:nowrap;">$3.49</div>
<div style="left:52px;top:586.00px;width:66px;font-size:13px;line-height:13px;font-weight:700;color:#000;text-align:center;white-space:nowrap;letter-spacing:-0.25px">East</div>
<div style="left:118px;top:586.00px;width:106px;font-size:13px;line-height:13px;font-weight:700;color:#000;text-align:center;white-space:nowrap;letter-spacing:-0.25px">Boston</div>
<div style="left:224px;top:586.00px;width:78px;font-size:13px;line-height:13px;font-weight:700;color:#000;text-align:center;white-space:nowrap;letter-spacing:-0.25px">Cookies</div>
<div style="left:302px;top:586.00px;width:118px;font-size:13px;line-height:13px;font-weight:700;color:#000;text-align:center;white-space:nowrap;letter-spacing:-0.25px">Arrowroot</div>
<div style="left:420px;top:586.00px;width:125px;font-size:13px;line-height:13px;font-weight:400;color:#000;text-align:center;white-space:nowrap;">34</div>
<div style="left:545px;top:586.00px;width:81px;font-size:13px;line-height:13px;font-weight:400;color:#000;text-align:center;white-space:nowrap;">$2.18</div>
<div style="left:52px;top:606.00px;width:66px;font-size:13px;line-height:13px;font-weight:700;color:#000;text-align:center;white-space:nowrap;letter-spacing:-0.25px">East</div>
<div style="left:118px;top:606.00px;width:106px;font-size:13px;line-height:13px;font-weight:700;color:#000;text-align:center;white-space:nowrap;letter-spacing:-0.25px">Boston</div>
<div style="left:224px;top:606.00px;width:78px;font-size:13px;line-height:13px;font-weight:700;color:#000;text-align:center;white-space:nowrap;letter-spacing:-0.25px">Cookies</div>
<div style="left:302px;top:606.00px;width:118px;font-size:13px;line-height:13px;font-weight:700;color:#000;text-align:center;white-space:nowrap;letter-spacing:-0.25px">Chocolate Chip</div>
<div style="left:420px;top:606.00px;width:125px;font-size:13px;line-height:13px;font-weight:400;color:#000;text-align:center;white-space:nowrap;">245</div>
<div style="left:545px;top:606.00px;width:81px;font-size:13px;line-height:13px;font-weight:400;color:#000;text-align:center;white-space:nowrap;">$1.87</div>
<div style="left:51px;top:213px;width:1px;height:408px;background:#000"></div>
<div style="left:117px;top:241px;width:1px;height:380px;background:#000"></div>
<div style="left:223px;top:241px;width:1px;height:380px;background:#000"></div>
<div style="left:301px;top:241px;width:1px;height:380px;background:#000"></div>
<div style="left:419px;top:241px;width:1px;height:380px;background:#000"></div>
<div style="left:544px;top:241px;width:1px;height:380px;background:#000"></div>
<div style="left:625px;top:213px;width:1px;height:408px;background:#000"></div>
<div style="left:51px;top:213px;width:575px;height:1px;background:#000"></div>
<div style="left:51px;top:241px;width:575px;height:1px;background:#000"></div>
<div style="left:51px;top:261px;width:575px;height:1px;background:#000"></div>
<div style="left:51px;top:281px;width:575px;height:1px;background:#000"></div>
<div style="left:51px;top:301px;width:575px;height:1px;background:#000"></div>
<div style="left:51px;top:321px;width:575px;height:1px;background:#000"></div>
<div style="left:51px;top:341px;width:575px;height:1px;background:#000"></div>
<div style="left:51px;top:361px;width:575px;height:1px;background:#000"></div>
<div style="left:51px;top:381px;width:575px;height:1px;background:#000"></div>
<div style="left:51px;top:401px;width:575px;height:1px;background:#000"></div>
<div style="left:51px;top:421px;width:575px;height:1px;background:#000"></div>
<div style="left:51px;top:441px;width:575px;height:1px;background:#000"></div>
<div style="left:51px;top:461px;width:575px;height:1px;background:#000"></div>
<div style="left:51px;top:481px;width:575px;height:1px;background:#000"></div>
<div style="left:51px;top:501px;width:575px;height:1px;background:#000"></div>
<div style="left:51px;top:521px;width:575px;height:1px;background:#000"></div>
<div style="left:51px;top:541px;width:575px;height:1px;background:#000"></div>
<div style="left:51px;top:561px;width:575px;height:1px;background:#000"></div>
<div style="left:51px;top:581px;width:575px;height:1px;background:#000"></div>
<div style="left:51px;top:601px;width:575px;height:1px;background:#000"></div>
<div style="left:51px;top:621px;width:575px;height:1px;background:#000"></div>
<div style="left:50px;top:260px;width:577px;height:363px;border:2px solid #217346;box-sizing:border-box"></div>
<div style="left:52px;top:262px;width:573px;height:359px;border:1px solid #fff;box-sizing:border-box"></div>
<div style="left:622px;top:618px;width:7px;height:7px;background:#fff"></div>
<div style="left:623px;top:619px;width:5px;height:5px;background:#217346"></div>
<div style="left:0px;top:636px;width:645px;height:28px;background:#f4f4f4"></div>
<div style="left:0px;top:636px;width:645px;height:1px;background:#b8b8b8"></div>
<svg style="left:24px;top:643px" width="10" height="14" viewBox="24 643 10 14"><path d="M32 645.5v8l-4.5-4z" fill="#c4c4c4"/></svg>
<svg style="left:54px;top:643px" width="10" height="14" viewBox="54 643 10 14"><path d="M56 645.5v8l4.5-4z" fill="#217346"/></svg>
<div style="left:100px;top:641px;width:1px;height:17px;background:#c6c6c6"></div>
<div style="left:113px;top:643.00px;font-size:13px;line-height:13px;font-weight:400;color:#444;text-align:left;white-space:nowrap;">Food Sale</div>
<div style="left:184px;top:636px;width:116px;height:25px;background:#fff;border-left:1px solid #b8b8b8;border-right:1px solid #b8b8b8;box-sizing:border-box"></div>
<div style="left:196px;top:642.50px;font-size:13px;line-height:13px;font-weight:700;color:#217346;text-align:left;white-space:nowrap;">AND Function</div>
<div style="left:184px;top:659px;width:116px;height:2px;background:#217346"></div>
<div style="left:299px;top:636px;width:1px;height:25px;background:#b8b8b8"></div>
<div style="left:314px;top:642.50px;font-size:13px;line-height:13px;font-weight:400;color:#444;text-align:left;white-space:nowrap;">OR Fi</div>
<div style="left:354px;top:642.50px;font-size:13px;line-height:13px;font-weight:700;color:#217346;text-align:left;white-space:nowrap;">...</div>
<svg style="left:376px;top:640px" width="20" height="20" viewBox="376 640 20 20"><circle cx="386" cy="649.8" r="7.2" fill="none" stroke="#777" stroke-width="1.1"/><path d="M386 645.5v8.6M381.7 649.8h8.6" stroke="#777" stroke-width="1.3"/></svg>
<div style="left:401px;top:637px;width:29px;height:27px;background:#fff"></div>
<div style="left:414px;top:644.5px;width:2px;height:2px;background:#a8a8a8"></div>
<div style="left:414px;top:649px;width:2px;height:2px;background:#a8a8a8"></div>
<div style="left:414px;top:653.5px;width:2px;height:2px;background:#a8a8a8"></div>
<div style="left:431px;top:643px;width:197px;height:15px;border:1px solid #6e6e6e;background:#fff;box-sizing:border-box"></div>
<div style="left:445px;top:644px;width:1px;height:13px;background:#777"></div>
<svg style="left:434px;top:644px" width="10" height="13" viewBox="434 644 10 13"><path d="M441 646v8l-4.2-4z" fill="#555"/></svg>
<div style="left:628px;top:643px;width:17px;height:15px;background:#e6e6e6"></div>
<div style="left:0px;top:664px;width:645px;height:5px;background:#217346"></div>
<div style="left:380px;top:664px;width:40px;height:5px;background:#0e5a2e"></div>
<div style="left:393px;top:668px;width:13px;height:1px;background:#fff"></div>
<div style="left:433px;top:668px;width:14px;height:1px;background:#fff"></div>
<div style="left:473px;top:668px;width:14px;height:1px;background:#fff"></div>
<svg style="left:248px;top:620px" width="32" height="28" viewBox="248 620 32 28"><path d="M264.8 623l-13.9 7v14l6.5 3.5v-11l7.4-4z" fill="rgba(185,200,250,0.6)"/><path d="M264.8 623l13.1 7v14l-6.5 3.5v-11l-6.6-4z" fill="rgba(200,200,205,0.6)"/><path d="M257.4 636.5l7.4-3.8v8l-7.4 3.8z" fill="rgba(205,205,210,0.5)"/><path d="M264.8 640.7l6.6 3.3-6.6 3.5-6.5-3.2z" fill="rgba(185,200,250,0.6)"/></svg>
<div style="left:283.5px;top:622.22px;font-size:21px;line-height:21px;font-weight:700;color:rgba(170,188,240,0.6);text-align:left;white-space:nowrap;letter-spacing:0.15px">exceldemy</div>
<div style="left:294.5px;top:643.65px;font-size:7.5px;line-height:7.5px;font-weight:700;color:rgba(140,140,140,0.45);text-align:left;white-space:nowrap;letter-spacing:2.6px">EXCEL DATA · BI</div>
<div style="left:292px;top:57px;width:192px;height:335px;background:#fff;border:1px solid #c8c8c8;box-shadow:1px 1px 3px rgba(0,0,0,0.12);box-sizing:border-box"></div>
<svg style="left:305px;top:65px" width="40" height="36" viewBox="305 65 40 36"><rect x="310.8" y="69.5" width="26.5" height="23.7" fill="#fff"/><rect x="317.4" y="75" width="13" height="6.6" fill="#ebc47c"/><path d="M311 74.9h26" stroke="#b5b5b5" stroke-width="1"/><path d="M311 81.1h26" stroke="#b5b5b5" stroke-width="1"/><path d="M311 87.0h26" stroke="#b5b5b5" stroke-width="1"/><path d="M317.4 70v23.2" stroke="#b5b5b5" stroke-width="1"/><path d="M330.4 70v23.2" stroke="#b5b5b5" stroke-width="1"/><rect x="310.8" y="69.5" width="26.5" height="23.7" fill="none" stroke="#6e6e6e" stroke-width="1.1"/><rect x="324.7" y="86.9" width="14.5" height="11.4" fill="#fff" stroke="#555" stroke-width="1.1"/><path d="M330.4 88.3l-4.1 1.7 4.1 1.7M326.2 94.1h4.2M326.2 96.3h4.2M333.2 92l4.3 2.3-4.3 2.3" fill="none" stroke="#333" stroke-width="0.9"/></svg>
<svg style="left:305px;top:113px" width="40" height="36" viewBox="305 113 40 36"><rect x="310.8" y="117.5" width="26.5" height="23.7" fill="#fff"/><rect x="317.4" y="117.5" width="13" height="17.8" fill="#f0c878"/><path d="M311 122.9h26" stroke="#b5b5b5" stroke-width="1"/><path d="M311 129.1h26" stroke="#b5b5b5" stroke-width="1"/><path d="M311 135.0h26" stroke="#b5b5b5" stroke-width="1"/><path d="M317.4 118v23.2" stroke="#b5b5b5" stroke-width="1"/><path d="M330.4 118v23.2" stroke="#b5b5b5" stroke-width="1"/><rect x="310.8" y="117.5" width="26.5" height="23.7" fill="none" stroke="#6e6e6e" stroke-width="1.1"/><path d="M323.8 131.5v-11.3M320.6 123.5l3.2-3.3 3.2 3.3" fill="none" stroke="#555" stroke-width="1.2"/><rect x="324.7" y="134.9" width="14.5" height="11.2" fill="#fff" stroke="#555" stroke-width="1.1"/><text x="331.7" y="144.2" font-size="10" text-anchor="middle" fill="#333" font-family="Liberation Serif">10</text></svg>
<svg style="left:305px;top:165px" width="40" height="36" viewBox="305 165 40 36"><rect x="310.8" y="169.5" width="26.5" height="24.7" fill="#fff"/><path d="M311 174.1h26" stroke="#b5b5b5" stroke-width="1"/><path d="M311 179.1h26" stroke="#b5b5b5" stroke-width="1"/><path d="M311 184.0h26" stroke="#b5b5b5" stroke-width="1"/><path d="M311 189.0h26" stroke="#b5b5b5" stroke-width="1"/><path d="M316.8 170v24.2" stroke="#b5b5b5" stroke-width="1"/><path d="M331.4 170v24.2" stroke="#b5b5b5" stroke-width="1"/><rect x="310.8" y="169.5" width="26.5" height="24.7" fill="none" stroke="#6e6e6e" stroke-width="1.1"/><rect x="317.2" y="169.8" width="9" height="4.2" fill="#4a7fc1"/><path d="M327 171.8h3" stroke="#444" stroke-width="0.9"/><rect x="317.2" y="174.8" width="3" height="4.2" fill="#4a7fc1"/><path d="M327 176.8h3" stroke="#444" stroke-width="0.9"/><rect x="317.2" y="179.8" width="6" height="4.2" fill="#4a7fc1"/><path d="M327 181.8h3" stroke="#444" stroke-width="0.9"/><rect x="317.2" y="184.8" width="8" height="4.2" fill="#4a7fc1"/><path d="M327 186.8h3" stroke="#444" stroke-width="0.9"/><rect x="317.2" y="189.8" width="6" height="4.2" fill="#4a7fc1"/><path d="M327 191.8h3" stroke="#444" stroke-width="0.9"/></svg>
<svg style="left:305px;top:213px" width="40" height="36" viewBox="305 213 40 36"><rect x="310.8" y="217.5" width="26.5" height="24.7" fill="#fff"/><path d="M311 222.1h26" stroke="#b5b5b5" stroke-width="1"/><path d="M311 227.1h26" stroke="#b5b5b5" stroke-width="1"/><path d="M311 232.0h26" stroke="#b5b5b5" stroke-width="1"/><path d="M311 237.0h26" stroke="#b5b5b5" stroke-width="1"/><path d="M316.8 218v24.2" stroke="#b5b5b5" stroke-width="1"/><path d="M331.4 218v24.2" stroke="#b5b5b5" stroke-width="1"/><rect x="310.8" y="217.5" width="26.5" height="24.7" fill="none" stroke="#6e6e6e" stroke-width="1.1"/><rect x="317.2" y="217.8" width="14" height="4.2" fill="#3f7cc4"/><path d="M324.2 220.6h5.8" stroke="#444" stroke-width="1"/><rect x="317.2" y="222.8" width="14" height="4.2" fill="#6aaa8c"/><path d="M324.2 225.6h5.8" stroke="#444" stroke-width="1"/><rect x="317.2" y="227.8" width="14" height="4.2" fill="#f5cd7c"/><path d="M324.2 230.6h5.8" stroke="#444" stroke-width="1"/><rect x="317.2" y="232.8" width="14" height="4.2" fill="#ef9643"/><path d="M324.2 235.6h5.8" stroke="#444" stroke-width="1"/><rect x="317.2" y="237.8" width="14" height="4.2" fill="#d8603b"/><path d="M324.2 240.6h5.8" stroke="#444" stroke-width="1"/></svg>
<svg style="left:305px;top:261px" width="40" height="36" viewBox="305 261 40 36"><rect x="310.8" y="265.5" width="26.5" height="24.7" fill="#fff"/><path d="M311 270.1h26" stroke="#b5b5b5" stroke-width="1"/><path d="M311 275.1h26" stroke="#b5b5b5" stroke-width="1"/><path d="M311 280.0h26" stroke="#b5b5b5" stroke-width="1"/><path d="M311 285.0h26" stroke="#b5b5b5" stroke-width="1"/><path d="M316.8 266v24.2" stroke="#b5b5b5" stroke-width="1"/><path d="M331.4 266v24.2" stroke="#b5b5b5" stroke-width="1"/><rect x="310.8" y="265.5" width="26.5" height="24.7" fill="none" stroke="#6e6e6e" stroke-width="1.1"/><circle cx="319.9" cy="267.9" r="1.5" fill="#5c9d7c"/><path d="M324.2 267.3h5.8" stroke="#555" stroke-width="1"/><circle cx="319.9" cy="272.9" r="1.5" fill="#e8732a"/><path d="M324.2 272.3h5.8" stroke="#555" stroke-width="1"/><circle cx="319.9" cy="277.9" r="1.5" fill="#5c9d7c"/><path d="M324.2 277.3h5.8" stroke="#555" stroke-width="1"/><circle cx="319.9" cy="282.9" r="1.5" fill="#e8732a"/><path d="M324.2 282.3h5.8" stroke="#555" stroke-width="1"/><circle cx="319.9" cy="287.9" r="1.5" fill="#5c9d7c"/><path d="M324.2 287.3h5.8" stroke="#555" stroke-width="1"/></svg>
<div style="left:347px;top:79.70px;font-size:12.4px;line-height:12.4px;font-weight:400;color:#262626;text-align:left;white-space:nowrap;-webkit-text-stroke:0.4px #262626;letter-spacing:-0.05px"><u>H</u>ighlight Cells Rules</div>
<div style="left:347px;top:127.70px;font-size:12.4px;line-height:12.4px;font-weight:400;color:#262626;text-align:left;white-space:nowrap;-webkit-text-stroke:0.4px #262626;letter-spacing:-0.05px"><u>T</u>op/Bottom Rules</div>
<div style="left:347px;top:179.30px;font-size:12.4px;line-height:12.4px;font-weight:400;color:#262626;text-align:left;white-space:nowrap;-webkit-text-stroke:0.4px #262626;letter-spacing:-0.05px"><u>D</u>ata Bars</div>
<div style="left:347px;top:227.10px;font-size:12.4px;line-height:12.4px;font-weight:400;color:#262626;text-align:left;white-space:nowrap;-webkit-text-stroke:0.4px #262626;letter-spacing:-0.05px">Color <u>S</u>cales</div>
<div style="left:347px;top:274.90px;font-size:12.4px;line-height:12.4px;font-weight:400;color:#262626;text-align:left;white-space:nowrap;-webkit-text-stroke:0.4px #262626;letter-spacing:-0.05px"><u>I</u>con Sets</div>
<svg style="left:465px;top:76px" width="12" height="14" viewBox="465 76 12 14"><path d="M468.5 78l5 5-5 5" fill="none" stroke="#444" stroke-width="1.1"/></svg>
<svg style="left:465px;top:124px" width="12" height="14" viewBox="465 124 12 14"><path d="M468.5 126l5 5-5 5" fill="none" stroke="#444" stroke-width="1.1"/></svg>
<svg style="left:465px;top:176px" width="12" height="14" viewBox="465 176 12 14"><path d="M468.5 178l5 5-5 5" fill="none" stroke="#444" stroke-width="1.1"/></svg>
<svg style="left:465px;top:224px" width="12" height="14" viewBox="465 224 12 14"><path d="M468.5 226l5 5-5 5" fill="none" stroke="#444" stroke-width="1.1"/></svg>
<svg style="left:465px;top:272px" width="12" height="14" viewBox="465 272 12 14"><path d="M468.5 274l5 5-5 5" fill="none" stroke="#444" stroke-width="1.1"/></svg>
<svg style="left:465px;top:340px" width="12" height="14" viewBox="465 340 12 14"><path d="M468.5 342l5 5-5 5" fill="none" stroke="#444" stroke-width="1.1"/></svg>
<div style="left:338px;top:155px;width:145px;height:1px;background:#e1e1e1"></div>
<div style="left:293px;top:302px;width:188px;height:35px;background:#e6efea"></div>
<svg style="left:304px;top:309px" width="20" height="20" viewBox="304 309 20 20"><rect x="307.7" y="312.7" width="11.7" height="11.4" fill="#fff"/><path d="M308.2 315.5h10.7M308.2 318.5h10.7M308.2 321.5h10.7M311.5 313.2v10.4M315.6 313.2v10.4" stroke="#c2c2c2" stroke-width="0.9"/><rect x="311.1" y="315.2" width="4.9" height="3.9" fill="#e9c27a"/><rect x="307.7" y="312.7" width="11.7" height="11.4" fill="none" stroke="#666" stroke-width="1"/></svg>
<div style="left:331px;top:313.84px;font-size:12px;line-height:12px;font-weight:400;color:#333;text-align:left;white-space:nowrap;letter-spacing:-0.25px"><u>N</u>ew Rule...</div>
<svg style="left:304px;top:337px" width="22" height="22" viewBox="304 337 22 22"><rect x="307.7" y="340.6" width="11.7" height="11.4" fill="#fff"/><path d="M308.2 343.4h10.7M308.2 346.4h10.7M308.2 349.4h10.7M311.5 341.1v10.4M315.6 341.1v10.4" stroke="#c2c2c2" stroke-width="0.9"/><rect x="311.1" y="343.1" width="4.9" height="3.9" fill="#e9c27a"/><path d="M319.4 345.1V340.6H307.7V352.0H311.2" fill="none" stroke="#666" stroke-width="1"/><path d="M316.3 353.2l5.5-5.2-3.2-3.2-5.5 5.2z" fill="#e58aa0"/><path d="M312.2 351.6l1.2-1.2 3 3-1.2 1.2z" fill="#e58aa0"/></svg>
<div style="left:331px;top:341.84px;font-size:12px;line-height:12px;font-weight:400;color:#333;text-align:left;white-space:nowrap;letter-spacing:-0.25px"><u>C</u>lear Rules</div>
<svg style="left:304px;top:364px" width="22" height="22" viewBox="304 364 22 22"><path d="M306.6 380v-12.3h12" fill="none" stroke="#666" stroke-width="1"/><rect x="308.6" y="369.7" width="11.7" height="11.4" fill="#fff"/><path d="M309.1 372.5h10.7M309.1 375.5h10.7M309.1 378.5h10.7M312.4 370.2v10.4M316.5 370.2v10.4" stroke="#c2c2c2" stroke-width="0.9"/><rect x="312.0" y="372.2" width="4.9" height="3.9" fill="#e9c27a"/><rect x="308.6" y="369.7" width="11.7" height="11.4" fill="none" stroke="#666" stroke-width="1"/></svg>
<div style="left:331px;top:369.84px;font-size:12px;line-height:12px;font-weight:400;color:#333;text-align:left;white-space:nowrap;letter-spacing:-0.25px">Manage <u>R</u>ules...</div>
<svg style="left:433px;top:322px" width="16" height="24" viewBox="433 322 16 24"><path d="M435.5 324.3v16.2l3.8-3.6 2.7 5.6 2.3-1.1-2.6-5.4h5.2z" fill="#fff" stroke="#1a1a1a" stroke-width="1" stroke-linejoin="round"/></svg>
<div style="left:293px;top:302px;width:188px;height:35px;border:3px solid #ff8000;border-radius:2px;box-sizing:border-box"></div>
</body></html>
